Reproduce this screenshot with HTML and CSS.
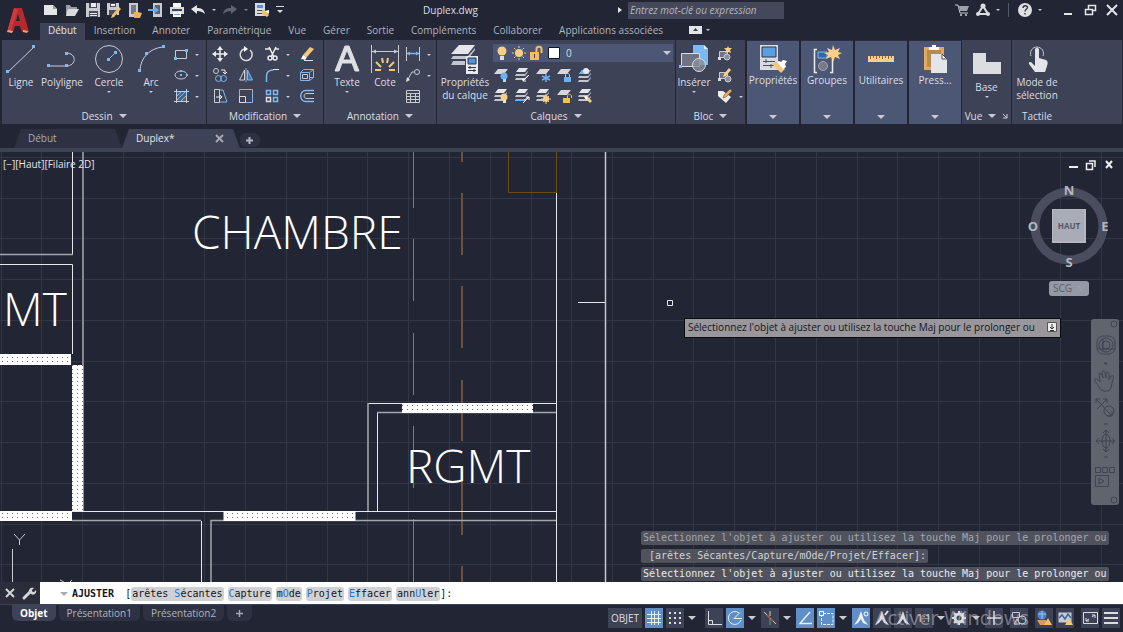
FILE: index.html
```html
<!DOCTYPE html>
<html lang="fr">
<head>
<meta charset="utf-8">
<title>Duplex.dwg</title>
<meta name="viewport" content="width=device-width, initial-scale=1">
<link rel="stylesheet" href="styles.css">
</head>
<body>
<svg class="defs" aria-hidden="true">
  <defs>
    <g id="sheets"><path d="M5 1h9l-3 4H2z" fill="#e4e6ea"/><path d="m2 7 9 0 3-3v1l-3 4H1zM2 11l9 0 3-3v1l-3 4H1z" fill="#c3c6cd"/></g>
    <path id="sheet" d="M5 2h10l-4 5H1z" fill="#d5d7dc"/>
    <pattern id="hatch" width="5" height="4" patternUnits="userSpaceOnUse"><rect width="5" height="4" fill="#fff"/><rect x="2" y="1" width="1" height="1" fill="#6a6d78"/></pattern>
  </defs>
</svg>

<header class="app-header">
  <button class="logo" aria-label="Menu de l'application">
    <svg width="24" height="28" viewBox="0 0 24 28"><path d="M1 26 8 2h8l7 24h-7l-2-6H9l-2 6z" fill="#b8292f"/><path d="m10 15 2-7 2 7z" fill="#222634"/><path d="m8 2-7 24 4-2L12 4z" fill="#d03a3e"/><path d="m2 24 5 1-1 2-5-1zm15 0 5 1-1 2-4-1z" fill="#e9a27c"/></svg>
  </button>
  <div class="title-row">
    <div class="quick">
      <button aria-label="Nouveau"><svg width="16" height="16"><path d="M1 3h9l4 4v6H1z" fill="#e4e5e8"/><path d="m10 3 4 4h-4z" fill="#9b9da6"/></svg></button>
      <button aria-label="Ouvrir"><svg width="16" height="16"><path d="M2 14V3h4l1 2h6v2" fill="#9b9da6"/><path d="m4 7h11l-4 7H2z" fill="#d8dade"/></svg></button>
      <button aria-label="Enregistrer"><svg width="16" height="16"><path d="M1 1h14v14H1z" fill="#c9cbd1"/><path d="M4 1h8v5H4zM4 9h9v6H4z" fill="#4a4e5e"/><path d="M6 1h5v4H6zM5 11h7v1H5zM5 13h7v1H5z" fill="#e9eaed"/></svg></button>
      <button aria-label="Enregistrer sous"><svg width="16" height="16"><path d="M1 1h12v12H1z" fill="#c9cbd1"/><path d="M4 1h6v4H4zM3 8h8v5H3z" fill="#4a4e5e"/><path d="M5 2h4v2H5z" fill="#eee"/><path d="m13 5 2 2-7 8-3 1 1-3z" fill="#f2c06a"/></svg></button>
      <button aria-label="Ouvrir depuis le mobile"><svg width="16" height="16"><rect x="2" y="1" width="9" height="14" fill="#c9cbd1"/><path d="M4 3h5v9H4z" fill="#767a88"/><path d="M7 10h4l4 1-2 5H7z" fill="#e8b25c"/></svg></button>
      <button aria-label="Enregistrer sur le mobile"><svg width="16" height="16"><rect x="5" y="1" width="9" height="14" fill="#c9cbd1"/><path d="M7 3h5v9H7z" fill="#5d6170"/><path d="M0 7h6V4l5 4-5 4V9H0z" fill="#6ea8e0"/></svg></button>
      <button aria-label="Tracer"><svg width="16" height="16"><path d="M4 1h8v4H4z" fill="#fff"/><path d="M1 5h14v7H1z" fill="#d9dbdf"/><path d="M3 7h10v2H3z" fill="#3d4358"/><path d="M4 10h8v5H4z" fill="#f7f8fa"/><path d="M5 12h6v1H5z" fill="#6ea8e0"/></svg></button>
      <button aria-label="Annuler"><svg width="16" height="16"><path d="m1 7 6-4v3c4 0 7 1 8 6-2-2-5-3-8-3v3z" fill="#e4e5e8"/></svg></button>
      <i class="caret"></i>
      <button aria-label="Rétablir"><svg width="16" height="16"><path d="M15 7 9 3v3c-4 0-7 1-8 6 2-2 5-3 8-3v3z" fill="#5f6475"/></svg></button>
      <i class="caret dim"></i>
      <button aria-label="Propriétés"><svg width="16" height="16"><path d="M1 1h10v13H1z" fill="#d9dbdf"/><path d="M3 3h6v3H3z" fill="#4f94d8"/><path d="M3 8h6v1H3zM3 11h5v1H3z" fill="#4a4e5e"/><path d="m8 8 4 1 3 4-2 2-5-3z" fill="#f2c06a"/><path d="m11 9 4-1v4z" fill="#fff"/></svg></button>
      <button aria-label="Personnaliser"><svg width="10" height="12"><path d="M1 2h8v1H1zM2 6h6L5 9z" fill="#d9dbdf"/></svg></button>
    </div>
    <h1>Duplex.dwg</h1>
    <i class="arrow-right"></i>
    <input class="search" type="search" placeholder="Entrez mot-clé ou expression" aria-label="Rechercher">
    <div class="window-tools">
      <button aria-label="Boutique"><svg width="16" height="16"><path d="M1 3h3l2 8h8" fill="none" stroke="#c9cbd1"/><path d="M5 4h10l-2 5H6z" fill="#9da0ab"/><circle cx="7" cy="13" r="1" fill="#c9cbd1"/><circle cx="12" cy="13" r="1" fill="#c9cbd1"/></svg></button>
      <button aria-label="Autodesk"><svg width="16" height="16"><path d="m8 4-5 8h10z" fill="none" stroke="#dcdde1" stroke-width="2"/><circle cx="8" cy="4" r="2.500" fill="#dcdde1"/><circle cx="3" cy="12" r="2" fill="#dcdde1"/><circle cx="13" cy="12" r="2" fill="#dcdde1"/></svg></button>
      <i class="caret"></i>
      <span class="rule"></span>
      <button aria-label="Aide"><svg width="16" height="16"><circle cx="8" cy="8" r="7" fill="#dfe0e4"/><path d="M6 6c0-3 4.500-3 4.500-.5C10.500 7 8 7 8 9.500M8 11v1.500" fill="none" stroke="#30354a" stroke-width="1.400"/></svg></button>
      <i class="caret"></i>
      <button class="win" aria-label="Réduire"><svg width="14" height="14"><path d="M3 10h8v2H3z" fill="#e4e5e8"/></svg></button>
      <button class="win" aria-label="Restaurer"><svg width="14" height="14"><path d="M2.500 6.500h7v5h-7zM5.500 6V2.500h7v5H10" fill="none" stroke="#e4e5e8" stroke-width="1.500"/></svg></button>
      <button class="win" aria-label="Fermer"><svg width="14" height="14"><path d="m2 2 10 10M12 2 2 12" stroke="#e4e5e8" stroke-width="2"/></svg></button>
    </div>
  </div>
  <nav class="ribbon-tabs">
    <button class="on">Début</button><button>Insertion</button><button>Annoter</button><button>Paramétrique</button><button>Vue</button><button>Gérer</button><button>Sortie</button><button>Compléments</button><button>Collaborer</button><button>Applications associées</button>
    <button class="collapse" aria-label="Réduire le ruban"><svg width="13" height="8"><path d="M0 0h13v8H0z" fill="#e4e5e8"/><path d="M4 5h5L6.500 2z" fill="#3d4155"/></svg><i class="caret"></i></button>
  </nav>
</header>

<main class="ribbon">
  <section class="panel w-draw">
    <div class="tools">
      <button class="big ligne"><svg width="30" height="30"><path d="M2 28 28 3" stroke="#c9cbd1"/><path d="M0 26h3v3H0zM26 1h3v3h-3z" fill="#7db8f0"/></svg><span>Ligne</span></button>
      <button class="big poly"><svg width="30" height="30"><path d="M2 22h17c11 0 11-13 0-13" fill="none" stroke="#c9cbd1"/><path d="M0 20h3v3H0zM18 20h3v3h-3zM18 8h3v3h-3z" fill="#7db8f0"/></svg><span>Polyligne</span></button>
      <button class="big cercle"><svg width="30" height="30"><circle cx="15" cy="15" r="13.500" fill="none" stroke="#c9cbd1"/><path d="m15 15 6-6" stroke="#7db8f0"/><path d="M13 14h3v3h-3zM20 7h3v3h-3z" fill="#7db8f0"/></svg><span>Cercle</span><i class="caret"></i></button>
      <button class="big arc"><svg width="30" height="30"><path d="M4 27C4 14 14 4 27 3" fill="none" stroke="#c9cbd1"/><path d="M2 25h3v3H2zM9 8h3v3H9zM26 1h3v3h-3z" fill="#7db8f0"/></svg><span>Arc</span><i class="caret"></i></button>
      <div class="smalls one">
        <button aria-label="Rectangle"><svg width="16" height="16"><path d="M2.500 4.500h11v8h-11z" fill="none" stroke="#c9cbd1"/><path d="M1 11h3v3H1zM12 3h3v3h-3z" fill="#7db8f0"/></svg><i class="caret"></i></button>
        <button aria-label="Ellipse"><svg width="16" height="16"><ellipse cx="8" cy="8" rx="6" ry="4" fill="none" stroke="#c9cbd1"/><path d="M7 7h2v2H7zM7 3h2v2H7zM13 7h2v2h-2z" fill="#7db8f0"/></svg><i class="caret"></i></button>
        <button aria-label="Hachures"><svg width="16" height="16"><path d="M4 4h9v9H4z" fill="#4c6484"/><path d="m4 8 4-4M4 12l8-8M8 13l5-5" stroke="#7db8f0"/><path d="M3.500 1v14M13.500 1v14M1 3.500h15M1 13.500h15" stroke="#c9cbd1"/></svg><i class="caret"></i></button>
      </div>
    </div>
    <h2>Dessin <i class="caret"></i></h2>
  </section>

  <section class="panel w-modify">
    <div class="tools">
      <div class="smalls modify">
        <button aria-label="Déplacer"><svg width="16" height="16"><path d="M8 2v12M2 8h12" stroke="#eceded" stroke-width="1.500"/><path d="m8 0 3 4H5zM8 16l3-4H5zM0 8l4-3v6zM16 8l-4-3v6z" fill="#eceded"/></svg></button>
        <button aria-label="Rotation"><svg width="16" height="16"><path d="M12 4a6 6 0 1 1-6-1" fill="none" stroke="#dcdde1" stroke-width="1.500"/><path d="m6 0 4 3-4 3z" fill="#fff"/></svg></button>
        <button aria-label="Ajuster"><svg width="16" height="16"><path d="M1 3h6M11 3h4M5 1l5 10M12 1 7 11" stroke="#eceded" stroke-width="1.500"/><circle cx="6" cy="12" r="2" fill="none" stroke="#eceded" stroke-width="1.500"/><circle cx="11" cy="12" r="2" fill="none" stroke="#eceded" stroke-width="1.500"/></svg><i class="caret"></i></button>
        <button aria-label="Effacer"><svg width="16" height="16"><path d="m11 1 4 2-7 8-4-2z" fill="#f4c67a"/><path d="m4 9 4 2-2 3-4-1z" fill="#fff"/><path d="m2 13 4 1H1z" fill="#d8383c"/><path d="M5 14.500h9" stroke="#dcdde1"/></svg></button>
        <button aria-label="Copier"><svg width="16" height="16"><circle cx="4" cy="4" r="2.500" fill="none" stroke="#c9cbd1"/><path d="M9 3h4v4m-2-2 2 2 2-2" fill="none" stroke="#eceded"/><circle cx="6.500" cy="11.500" r="3" fill="none" stroke="#7db8f0"/><circle cx="11.500" cy="11.500" r="3" fill="none" stroke="#7db8f0"/></svg></button>
        <button aria-label="Miroir"><svg width="16" height="16"><path d="M6.500 3v10h-5z" fill="none" stroke="#c9cbd1"/><path d="M9.500 3v10h5z" fill="#3f76ae" stroke="#7db8f0"/><path d="M8 1v14" stroke="#8fa6c4"/></svg></button>
        <button aria-label="Raccord"><svg width="16" height="16"><path d="M2.500 15V9c0-4 3-6 7-6" fill="none" stroke="#7db8f0" stroke-width="1.500"/><path d="M9 2.500h6" stroke="#eceded"/></svg><i class="caret"></i></button>
        <button aria-label="Décomposer"><svg width="16" height="16"><path d="M1.500 5.500h9v8h-9zM4.500 2.500h10v8h-4M1.500 5.500l3-3M10.500 5.500l4-3M10.500 13.500l4-3" fill="none" stroke="#7db8f0"/><path d="M3.500 7.500h5v4h-5z" fill="none" stroke="#c9cbd1"/></svg></button>
        <button aria-label="Étirer"><svg width="16" height="16"><path d="M2.500 1.500h5v13h-5z" fill="none" stroke="#c9cbd1"/><path d="m8 2 3 0 4 12H8" fill="none" stroke="#7db8f0"/><path d="M4 9h6m-2-2 2 2-2 2" fill="none" stroke="#eceded"/></svg></button>
        <button aria-label="Échelle"><svg width="16" height="16"><path d="M1.500 1.500h13v13h-13z" fill="none" stroke="#7db8f0"/><path d="M1.500 8.500h6v6h-6z" fill="#3e4257" stroke="#dcdde1"/></svg></button>
        <button aria-label="Réseau"><svg width="16" height="16"><path d="M2.500 2.500h4v4h-4zM9.500 2.500h4v4h-4zM9.500 9.500h4v4h-4z" fill="none" stroke="#7db8f0" stroke-width="1.500"/><path d="M2.500 9.500h4v4h-4z" fill="none" stroke="#dcdde1" stroke-width="1.500"/></svg><i class="caret"></i></button>
        <button aria-label="Décaler"><svg width="16" height="16"><path d="M15 2.500H7c-7 0-7 11 0 11h8" fill="none" stroke="#7db8f0" stroke-width="1.500"/><path d="M15 5.500H8c-4 0-4 5 0 5h7" fill="none" stroke="#c9cbd1"/></svg></button>
      </div>
    </div>
    <h2>Modification <i class="caret"></i></h2>
  </section>

  <section class="panel w-annot">
    <div class="tools">
      <button class="big texte"><svg width="30" height="30"><path d="M3 27 13 2h4l10 25h-4l-3-8H10l-3 8zm8-11h8l-4-10z" fill="#dfe0e4" stroke="#dfe0e4"/></svg><span>Texte</span><i class="caret"></i></button>
      <button class="big cote"><svg width="30" height="30"><path d="M1.500 1v28M28.500 1v28M2 7.500h26" stroke="#c9cbd1" fill="none"/><path d="m2 7.500 4-2v4zM28 7.500l-4-2v4z" fill="#c9cbd1"/><path d="m6 18 5 5M24 18l-5 5M12 14l1 5M18 14l-1 5M5 26h6M25 26h-6" stroke="#f4c67a" stroke-width="2"/></svg><span>Cote</span></button>
      <div class="smalls one">
        <button aria-label="Linéaire"><svg width="16" height="16"><path d="M1.500 1v14M14.500 1v14" stroke="#c9cbd1"/><path d="M2 7.500h12" stroke="#7db8f0" stroke-width="1.500"/><path d="m2 7.500 3-2v4zM14 7.500l-3-2v4z" fill="#7db8f0"/></svg><i class="caret"></i></button>
        <button aria-label="Repère"><svg width="16" height="16"><circle cx="12" cy="5" r="2.500" fill="none" stroke="#c9cbd1"/><path d="M9 5H7l-5 9" fill="none" stroke="#c9cbd1"/><path d="m1 15 1-5 3 3z" fill="#dcdde1"/></svg><i class="caret"></i></button>
        <button aria-label="Tableau"><svg width="16" height="16"><path d="M1.500 2.500h13v12h-13zM1.500 5.500h13M1.500 8.500h13M1.500 11.500h13M5.500 5v9M10.500 5v9" fill="none" stroke="#c9cbd1"/></svg></button>
      </div>
    </div>
    <h2>Annotation <i class="caret"></i></h2>
  </section>

  <section class="panel w-layers">
    <div class="tools">
      <button class="big calque"><svg width="30" height="30"><path d="M9 1h16l-7 9H1z" fill="#e4e6ea"/><path d="m3 12-2 3h17l7-9v-2l-7 8zM3 17l-2 4h14v-4z" fill="#c3c6cd"/><path d="M16 12h12v18H16z" fill="#e9eaed"/><path d="M18 14h8v6h-8z" fill="#4f94d8" stroke="#30354a"/><path d="M18 23.500h8M18 26.500h8M20 22v3M24 25v3" stroke="#30354a"/></svg><span>Propriétés du calque</span></button>
      <div class="layer-side">
        <label class="layer-combo">
          <svg width="68" height="18"><circle cx="9" cy="7" r="4.500" fill="#f8cf85"/><path d="M7 12h4v4H7z" fill="#dcdde1"/><circle cx="26" cy="9" r="4" fill="#f8cf85"/><path d="M26 2v14M19 9h14M21 4l10 10M31 4 21 14" stroke="#f8cf85" stroke-dasharray="2 10"/><path d="M37 8h9v8h-9z" fill="#f4bd62"/><path d="M43.500 8V5c0-3 5-3 5 0v4" fill="none" stroke="#f4bd62" stroke-width="2"/><path d="M41 10h1v4h-1z" fill="#3d4257"/><path d="M55.500 3.500h11v11h-11z" fill="#fff" stroke="#14161f"/></svg>
          <select aria-label="Calque courant"><option>0</option></select>
          <i class="caret wide"></i>
        </label>
        <div class="layer-grid">
          <button aria-label="Désactiver"><svg width="16" height="16"><use href="#sheet"/><circle cx="11" cy="9" r="3.500" fill="#6fb1f0"/><path d="M10 12h3v3h-3z" fill="#b9d4f0"/></svg></button>
          <button aria-label="Isoler"><svg width="16" height="16"><use href="#sheets"/><path d="m15 8-6 6m0-3v3h3" fill="none" stroke="#fff"/></svg></button>
          <button aria-label="Geler"><svg width="16" height="16"><use href="#sheet"/><path d="M11 7v8M7 9l8 4M7 13l8-4" stroke="#6fb1f0" stroke-width="1.500"/></svg></button>
          <button aria-label="Verrouiller"><svg width="16" height="16"><use href="#sheet"/><path d="M8 10h7v5H8z" fill="#6fb1f0"/><path d="M9.500 10V8c0-2 4-2 4 0v2" fill="none" stroke="#a8cdf3"/></svg></button>
          <button aria-label="Rendre courant"><svg width="16" height="16"><use href="#sheets" y="2"/><path d="M5 3h9l-3 4H2z" fill="#6fb1f0"/><circle cx="9" cy="4" r="3" fill="#e9eaed"/></svg></button>
          <button aria-label="Activer tous"><svg width="16" height="16"><use href="#sheets"/><circle cx="11" cy="9" r="3.500" fill="#f8cf85"/><path d="M10 12h3v3h-3z" fill="#f8e3bd"/></svg></button>
          <button aria-label="Annuler l'isolement"><svg width="16" height="16"><use href="#sheets"/><path d="M2 11h8l1 2H2z" fill="#6fb1f0"/><path d="m9 15 6-6m-3 0h3v3" fill="none" stroke="#fff"/></svg></button>
          <button aria-label="Dégeler tous"><svg width="16" height="16"><use href="#sheets"/><circle cx="11" cy="11" r="3" fill="#f8cf85"/><path d="M11 6v10M6 11h10M8 8l6 6M14 8l-6 6" stroke="#f8cf85"/></svg></button>
          <button aria-label="Déverrouiller"><svg width="16" height="16"><use href="#sheet"/><path d="M7 10h7v5H7z" fill="#f4bd62"/><path d="M11.500 10V8c0-2 4-2 4 0v2" fill="none" stroke="#f4bd62"/></svg></button>
          <button aria-label="Copier les propriétés"><svg width="16" height="16"><use href="#sheets"/><path d="m7 9 3-1 5 5-2 2z" fill="#f8cf85"/><path d="m7 8 4 1-2 3z" fill="#fff"/></svg></button>
        </div>
      </div>
    </div>
    <h2>Calques <i class="caret"></i></h2>
  </section>

  <section class="panel w-block">
    <div class="tools">
      <button class="big inserer"><svg width="30" height="30"><path d="M14 1h11l4 4v16H14z" fill="#7db8f0"/><path d="m25 1 4 4h-4z" fill="#dcecfb"/><path d="M2.500 9.500h18v13h-18z" fill="#6f7383" stroke="#dcdde1"/><circle cx="20" cy="21" r="6.500" fill="#8a8d9a" fill-opacity=".8" stroke="#dcdde1"/><path d="M0 21h3v3H0z" fill="#7db8f0"/></svg><span>Insérer</span><i class="caret"></i></button>
      <div class="smalls one">
        <button aria-label="Créer"><svg width="16" height="16"><path d="M2.500 5.500h8v6h-8z" fill="#6f7383" stroke="#c9cbd1"/><circle cx="10" cy="11" r="3" fill="#8a8d9a" stroke="#c9cbd1"/><path d="M1 11h3v3H1z" fill="#dcdde1"/><path d="m11 0 1 2 3 0-2 2 1 3-3-1-3 1 1-3-2-2h3z" fill="#f8cf85"/></svg></button>
        <button aria-label="Modifier"><svg width="16" height="16"><path d="M2.500 5.500h8v6h-8z" fill="#6f7383" stroke="#c9cbd1"/><circle cx="11" cy="12" r="3" fill="#8a8d9a" stroke="#c9cbd1"/><path d="M1 11h3v3H1z" fill="#dcdde1"/><path d="m12 1 2 2-5 6-3 1 1-3z" fill="#f8cf85"/></svg></button>
        <button aria-label="Attributs"><svg width="16" height="16"><path d="M1 3h5l8 6-5 6-8-7z" fill="#eceded"/><path d="m13 1 2 2-6 6-3 1 1-3z" fill="#f4a850" stroke="#4a4e5e" stroke-width=".5"/></svg><i class="caret"></i></button>
      </div>
    </div>
    <h2>Bloc <i class="caret"></i></h2>
  </section>

  <button class="panel closed"><svg width="30" height="30"><path d="M2 1h18v25H2z" fill="#d9dbdf"/><path d="M4 3h14v10H4z" fill="#5c9fe0" stroke="#30354a"/><path d="M5 17.500h12M5 21.500h12M8 15v4M13 20v4" stroke="#4a4e5e"/><path d="m14 20 6-3 7 8-4 4z" fill="#f4c67a"/><path d="m19 18 6 7 3-2-1-3 2-3-4-1-2 2-2-1z" fill="#fff"/></svg><span>Propriétés</span><i class="caret wide"></i></button>
  <button class="panel closed"><svg width="30" height="30"><path d="M5 5.500H2.500v23H5M18 28.500h2.500V14" fill="none" stroke="#eceded" stroke-width="1.500"/><path d="M6 8h9v6H6z" fill="#2f69a6" stroke="#7db8f0"/><circle cx="11" cy="22" r="4.500" fill="#777b89" stroke="#a4a7b2"/><path d="m21 1 2 5 5-2-2 4 4 1-4 2 2 4-5-2-2 5-2-5-5 2 2-4-4-2 5-1-2-4 5 2z" fill="#f8cf85"/></svg><span>Groupes</span><i class="caret wide"></i></button>
  <button class="panel closed"><svg width="30" height="30"><path d="M2 12h26v6H2z" fill="#f8cf85"/><path d="M4.500 12v3M7.500 12v2M10.500 12v3M13.500 12v2M16.500 12v3M19.500 12v2M22.500 12v3M25.500 12v2" stroke="#8b6a35"/></svg><span>Utilitaires</span><i class="caret wide"></i></button>
  <button class="panel closed"><svg width="30" height="30"><path d="M4 3h20v23H4z" fill="#e0aa62"/><path d="M7 6h14v17H7z" fill="#b98a4e"/><path d="M9 3h3V1h4v2h3v3H9z" fill="#fff"/><path d="M11 10h11l5 5v14H11z" fill="#e4e5e8"/><path d="m22 10 5 5h-5z" fill="#fff" stroke="#4a4e5e"/></svg><span>Press...</span><i class="caret wide"></i></button>

  <section class="panel w-view">
    <div class="tools centre"><button class="big base"><svg width="30" height="36"><path d="M1 10h13v9h15v12H1z" fill="#dcdde1"/></svg><span>Base</span><i class="caret"></i></button></div>
    <h2>Vue <i class="caret"></i><svg width="6" height="6"><path d="m1 1 4 4M5 1v4H1" fill="none" stroke="#c9cbd1"/></svg></h2>
  </section>
  <section class="panel w-touch">
    <div class="tools"><button class="big mode"><svg width="30" height="30"><path d="M9 12a6.500 6.500 0 1 1 12 0" fill="none" stroke="#c9cbd1"/><path d="M13 6c0-3 4-3 4 0v8l7 2c2 1 2 3 1 6l-2 6H13l-6-8c-1-2 2-3 3-1l3 3z" fill="#e4e5e8"/></svg><span>Mode de sélection</span></button></div>
    <h2>Tactile</h2>
  </section>
</main>

<nav class="file-tabs">
  <button class="file first">Début</button>
  <button class="file on">Duplex*<svg width="9" height="9"><path d="m1 1 7 7M8 1 1 8" stroke="#a4a7b2" stroke-width="2"/></svg></button>
  <button class="file plus" aria-label="Nouveau dessin"><svg width="9" height="9"><path d="M4.500 1v7M1 4.500h7" stroke="#b4b7c1" stroke-width="2"/></svg></button>
</nav>

<section class="canvas">
  <svg class="drawing" width="100%" height="100%">
    <g transform="translate(0 -152)">
      <path d="M1.500 152v480M41.500 152v480M82.500 152v480M123.500 152v480M163.500 152v480M204.500 152v480M245.500 152v480M286.500 152v480M327.500 152v480M367.500 152v480M408.500 152v480M449.500 152v480M490.500 152v480M531.500 152v480M571.500 152v480M612.500 152v480M653.500 152v480M693.500 152v480M734.500 152v480M775.500 152v480M816.500 152v480M857.500 152v480M897.500 152v480M938.500 152v480M979.500 152v480M1019.500 152v480M1060.500 152v480M1101.500 152v480M0 157.500h2000M0 198.500h2000M0 238.500h2000M0 279.500h2000M0 320.500h2000M0 361.500h2000M0 401.500h2000M0 442.500h2000M0 483.500h2000M0 524.500h2000M0 564.500h2000" stroke="#323645"/>
      <g fill="none">
        <path d="M413.500 152v56M413.500 239v62M413.500 333v62M413.500 426v62M413.500 519v63" stroke="#a07833"/>
        <path d="M462 152v10M462 193v62M462 286v62M462 380v61M462 473v62M462 566v16" stroke="#6c523b" stroke-width="2"/>
        <path d="M508.500 152v40.500h48V152" stroke="#6b4b1c"/>
      </g>
      <g fill="none" stroke="#e6e7ea">
        <path d="M72.500 152v102M0 264.500h72.500V354M72 511.500h484M201.500 521v61M556.500 193v389M377.500 511v-98M368 403.500h188M578 302.500h27"/>
        <path d="M83 152v213M0 254.500h73M72 520.500h129M211 582v-61.500h345M368 403v108M377 412.500h179" stroke="#a4a6ad" stroke-width="1.500"/>
        <path d="M605.500 152v430" stroke="#c6c8cc" stroke-width="1.500"/>
        <path d="m14 534 5.500 6 5.500-6M19.500 540v5M12.500 549v33M60 580l4 2M72 580l-2 2" stroke="#c9cbd1"/>
        <path d="M667.500 300.500h5v5h-5z"/>
      </g>
      <g fill="url(#hatch)"><path d="M0 354h71v11H0zM72 365h11.500v146H72zM0 511h72v10H0zM223.500 511h132v10h-132zM402 403h131v10H402z"/></g>
      <g class="room"><text x="192" y="249">CHAMBRE</text><text x="406" y="483">RGMT</text><text x="3" y="326">MT</text></g>
    </g>
  </svg>
  <p class="view-label">[−][Haut][Filaire 2D]</p>
  <div class="view-controls">
    <button aria-label="Réduire la vue"><svg width="12" height="12"><path d="M2 7h9v2H2z" fill="#eceded"/></svg></button>
    <button aria-label="Restaurer la vue"><svg width="12" height="12"><path d="M1.500 4.500h6v6h-6zM4 2h6v6" fill="none" stroke="#eceded" stroke-width="1.500"/></svg></button>
    <button aria-label="Fermer la vue"><svg width="12" height="12"><path d="m3 2 6 7M9 2 3 9" stroke="#eceded" stroke-width="2"/></svg></button>
  </div>
  <svg class="cube" width="84" height="92" viewBox="0 0 84 92">
    <circle cx="42" cy="46" r="34" fill="none" stroke="#4a4d5e" stroke-width="9"/>
    <path d="M25 29h34v34H25z" fill="#b4b6c0"/><path d="M26 30h31v31H26z" fill="#a9abb7"/>
    <g class="cube-text"><text x="42" y="15">N</text><text x="6" y="51">O</text><text x="78" y="51">E</text><text x="42" y="87">S</text></g>
    <text class="cube-face" x="42" y="49">HAUT</text>
  </svg>
  <button class="scg">SCG<svg width="8" height="6"><path d="M1 1h6L4 5z" fill="none" stroke="#9d9faa"/></svg></button>
  <div class="nav-bar">
    <svg width="28" height="186" fill="none" stroke="#3f4352">
      <circle cx="23" cy="5" r="3"/><circle cx="23" cy="181" r="3"/>
      <rect x="6" y="17" width="18" height="18" rx="6"/><circle cx="15" cy="26" r="7"/><circle cx="15" cy="26" r="4"/><path d="M6 30h18M12 20v12M13 44h3l-1 2z"/>
      <path d="M8 68c-2-4-5-6-4-8s4 2 5 3l-1-8c0-2 2-1 3 1l1 3-1-6c1-2 3-1 3 1l1 5V54c1-2 3-1 3 1v6l2-4c2-1 3 0 2 3l-2 9c-1 4-9 5-12-1z"/>
      <path d="m5 80 16 17m0-5v5h-5M16 80l-10 10m10-10h-4m4 0v4M5 80h4m-4 0v4M13 105h4"/><circle cx="18" cy="92" r="5"/>
      <path d="M15 111v22m-3-19 3-3 3 3m-6 16 3 3 3-3M5 122h19m-16-3-3 3 3 3m13-6 3 3-3 3"/><ellipse cx="15" cy="122" rx="4" ry="7"/><path d="M13 138h4"/>
      <path d="M4.500 148.500h5v5h-5zM11.500 148.500h5v5h-5zM18.500 148.500h5v5h-5zM4.500 156.500h13v11h-13zM8 159v6l5-3z"/>
    </svg>
  </div>
  <div class="prompt-tip"><span>Sélectionnez l'objet à ajuster ou utilisez la touche Maj pour le prolonger ou</span><svg width="10" height="10"><path d="M.5.5h9v9h-9z" fill="#eceded" stroke="#555"/><path d="M5 2v5M3 5l2 2 2-2M3 8.500h4" fill="none" stroke="#333"/></svg></div>
  <div class="history">
    <p class="old">Sélectionnez l'objet à ajuster ou utilisez la touche Maj pour le prolonger ou</p>
    <p class="mid"> [arêtes Sécantes/Capture/mOde/Projet/Effacer]:</p>
    <p>Sélectionnez l'objet à ajuster ou utilisez la touche Maj pour le prolonger ou</p>
  </div>
</section>

<section class="command">
  <button aria-label="Fermer"><svg width="16" height="16"><path d="m4 4 8 8M12 4l-8 8" stroke="#d3d5da" stroke-width="2"/></svg></button>
  <button aria-label="Personnaliser"><svg width="16" height="16"><path d="m3 13 6-6" stroke="#d3d5da" stroke-width="3" stroke-linecap="round"/><path d="M8 8c-1-4 2-6 5-5l-2 2v1l1 1h1l2-2c1 3-2 6-5 4z" fill="#d3d5da"/></svg></button>
  <div class="line"><i class="caret grey"></i><b>AJUSTER</b><span>[</span><button>arêtes <em>S</em>écantes</button><button><em>C</em>apture</button><button>m<em>O</em>de</button><button><em>P</em>rojet</button><button><em>E</em>ffacer</button><button>ann<em>U</em>ler</button><span class="end">]:</span><input type="text" aria-label="Commande"></div>
</section>

<footer class="status">
  <nav class="layouts"><button class="on">Objet</button><button>Présentation1</button><button>Présentation2</button><button class="add" aria-label="Nouvelle présentation"><svg width="9" height="9"><path d="M4.500 1v7M1 4.500h7" stroke="#a4a7b2" stroke-width="1.500"/></svg></button></nav>
  <div class="toggles">
    <button class="word">OBJET</button>
    <button class="hot" aria-label="Grille"><svg width="18" height="18"><path d="M6.500 2v14M9.500 2v14M13.500 2v14M2 5.500h14M2 9.500h14M2 13.500h14" stroke="#e9eef6"/></svg></button>
    <button aria-label="Accrochage"><svg width="18" height="18"><path d="M3 4h12M3 9h12M3 14h12" stroke="#dcdde1" stroke-width="2" stroke-dasharray="2 3"/></svg></button><i class="caret wide"></i>
    <button class="gap" aria-label="Ortho"><svg width="18" height="18"><path d="M3.500 2v13.500H17M3.500 11.500h4v4" fill="none" stroke="#dcdde1"/></svg></button>
    <button class="hot" aria-label="Repérage polaire"><svg width="18" height="18"><path d="M13 4a6.500 6.500 0 1 0 2 7M8 9.500h8M8 9.500l6-6" fill="none" stroke="#e9eef6"/></svg></button><i class="caret wide"></i>
    <button aria-label="Isométrie"><svg width="18" height="18"><path d="m3 3 12 12M9 2v5" stroke="#c9cbd1"/><path d="m6 6 6 6" stroke="#c8523e" stroke-width="1.500"/><path d="M9 9v7" stroke="#59a46a"/></svg></button><i class="caret wide"></i>
    <button class="hot" aria-label="Repérage d'accrochage"><svg width="18" height="18"><path d="M14 3 4 14.500h12" fill="none" stroke="#e9eef6" stroke-width="1.500"/></svg></button>
    <button class="hot" aria-label="Accrochage aux objets"><svg width="18" height="18"><path d="M6 4.500h10v11H4.500V7" fill="none" stroke="#e9eef6" stroke-dasharray="3 1"/><path d="M2.500 2.500h4v4h-4z" fill="#6191c8" stroke="#fff"/></svg></button><i class="caret wide"></i>
    <button class="hot" aria-label="Visibilité des annotations"><svg width="18" height="18"><path d="m9 2 3 9 4 5-5-2-2-4-3 4-4 2 4-6z" fill="#eef2f8"/><circle cx="14" cy="5" r="2" fill="none" stroke="#fff"/></svg></button>
    <button aria-label="Échelle automatique"><svg width="18" height="18"><path d="m9 2 3 9 4 5-5-2-2-4-3 4-4 2 4-6z" fill="#dcdde1"/><path d="m12 6 3-4" stroke="#dcdde1" stroke-width="2"/></svg></button>
    <button aria-label="Annotation"><svg width="18" height="18"><path d="m9 2 3 9 4 5-5-2-2-4-3 4-4 2 4-6z" fill="#dcdde1"/></svg></button>
    <button>1:1</button><i class="caret wide"></i>
    <button aria-label="Espace de travail"><svg width="18" height="18"><circle cx="9" cy="9" r="4" fill="none" stroke="#dcdde1" stroke-width="3"/><path d="M9 2v3M9 13v3M2 9h3M13 9h3M4 4l2 2M12 12l2 2M14 4l-2 2M6 12l-2 2" stroke="#dcdde1" stroke-width="2"/></svg></button><i class="caret wide"></i>
    <button aria-label="Surveillance"><svg width="18" height="18"><path d="M9 2v14M2 9h14" stroke="#dcdde1" stroke-width="1.500"/></svg></button>
    <button class="gap" aria-label="Isoler les objets"><svg width="18" height="18"><path d="M2.500 3.500h7v5h-7zM4 15l3-5 3 5z" fill="none" stroke="#c9cbd1"/><circle cx="12" cy="11" r="4" fill="none" stroke="#c9cbd1"/></svg></button>
    <button class="gap" aria-label="Accélération"><svg width="18" height="18"><circle cx="7" cy="6" r="4.500" fill="#4e84bf"/><path d="M3 5h8M7 2v8" stroke="#9fc6ee"/><path d="M2 11h9l3 5H5z" fill="#d99a54"/><path d="m13 9 4 7H9z" fill="#f4bd62"/></svg></button>
    <button aria-label="Performances"><svg width="18" height="18"><path d="M2.500 3.500h13v10h-13z" fill="#c9cbd1"/><path d="m3 9 3-3 3 4 3-5 3 4" fill="none" stroke="#36699f" stroke-width="1.500"/><path d="m13 9 4 7H9z" fill="#f4c67a"/></svg></button>
    <button class="gap" aria-label="Plein écran"><svg width="18" height="18"><path d="M2.500 3.500h14v11h-14zM5 12l3-2M5 9v3h3M14 6l-3 2m0-2h3v3" fill="none" stroke="#dcdde1"/></svg></button>
    <button aria-label="Personnalisation"><svg width="18" height="18"><path d="M2 4h14M2 9h14M2 14h14" stroke="#dcdde1" stroke-width="2"/></svg></button>
  </div>
  <span class="watermark">Activer Windows</span>
</footer>
</body>
</html>
```
FILE: styles.css
```css
* { box-sizing: border-box; }

:root {
  --dark: #222634;
  --panel: #3e4257;
  --panel-open: #4b5774;
  --text: #dcdee3;
}

body {
  margin: 0;
  min-height: 100vh;
  display: flex;
  flex-direction: column;
  background: var(--dark);
  color: var(--text);
  font: 10px/13px "Open Sans", "Noto Sans", sans-serif;
  overflow: hidden;
}

button {
  padding: 0;
  border: 0;
  background: none;
  color: inherit;
  font: inherit;
}

svg { display: block; flex: none; }
p, h1, h2 { margin: 0; font: inherit; }
.defs { position: absolute; width: 0; height: 0; }

.caret {
  flex: none;
  border: 2px solid transparent;
  border-top-color: #c9cbd1;
  border-bottom: 0;
}
.caret.wide { border-width: 4px 4px 0; }
.caret.dim { border-top-color: #7d8190; }
.caret.grey { border-width: 4px 4px 0; border-top-color: #aaa; }
h2 .caret { border-width: 4px 4px 0; }

/* Title bar and ribbon tabs */
.app-header {
  display: grid;
  grid-template-columns: 40px 1fr;
  grid-template-rows: 20px 20px;
}
.logo { grid-row: 1 / 3; display: grid; place-items: center; padding-right: 4px; }
.title-row { display: flex; align-items: center; }
.quick { display: flex; align-items: center; width: 383px; padding-left: 3px; gap: 5px; }
.quick .caret { margin: 0 1px; }
.title-row h1 { width: 195px; }
.arrow-right {
  border: 3px solid transparent;
  border-left: 4px solid #e4e5e8;
  border-right: 0;
  margin-right: 6px;
}
.search {
  width: 156px;
  height: 17px;
  padding: 0 2px;
  border: 0;
  background: #44485a;
  color: #c3c5cc;
  font: italic 10px/17px "Open Sans", sans-serif;
}
.search::placeholder { color: #b4b6be; }
.window-tools { display: flex; align-items: center; margin-left: auto; padding-right: 4px; gap: 5px; }
.rule { width: 1px; height: 14px; margin: 0 3px; background: #555968; }
.win { margin-left: 3px; }
.window-tools .caret + .win { margin-left: 14px; }

.ribbon-tabs { display: flex; align-items: stretch; padding-top: 3px; color: #b0b3bd; }
.ribbon-tabs button { padding: 0 8px 3px 9px; white-space: nowrap; }
.ribbon-tabs .on { padding: 0 8px 3px; background: var(--panel); color: #e4e5e8; }
.ribbon-tabs .collapse { display: flex; align-items: center; gap: 4px; padding-left: 18px; }

/* Ribbon */
.ribbon { display: flex; gap: 1px; padding: 0 1px 0 2px; height: 84px; }
.panel { display: flex; flex-direction: column; background: var(--panel); }
.panel h2 {
  display: flex;
  align-items: center;
  justify-content: center;
  gap: 6px;
  margin-top: auto;
  height: 16px;
}
.w-draw { width: 204px; }
.w-modify { width: 116px; }
.w-annot { width: 112px; }
.w-layers { width: 238px; }
.w-block { width: 69px; }
.w-view { width: 49px; }
.w-touch { flex: 1; }
.w-touch h2 { width: 50px; }
.tools { display: flex; padding-top: 3px; height: 67px; }
.tools.centre { justify-content: center; }
.big { display: flex; flex-direction: column; align-items: center; width: 50px; padding-top: 1px; white-space: nowrap; }
.big span { margin-top: 2px; }
.big .caret, .smalls .caret { margin-top: 2px; }
.ligne { width: 38px; }
.poly { width: 44px; }
.cercle { width: 50px; }
.arc { width: 34px; }
.texte { width: 46px; }
.cote { width: 30px; }
.calque { width: 56px; white-space: normal; }
.inserer { width: 36px; }
.base { padding-top: 0; }
.mode { white-space: normal; }

.smalls { display: grid; grid-auto-rows: 21px; }
.smalls button { display: flex; align-items: center; gap: 6px; }
.smalls.one { padding-left: 5px; }
.smalls.modify { grid-template-columns: 26px 26px 35px 20px; padding-left: 5px; }

.layer-combo { display: flex; align-items: center; height: 18px; margin-top: 1px; background: var(--panel-open); padding-right: 2px; }
.layer-side { flex: 1; padding-right: 2px; }
.layer-combo select {
  flex: 1;
  appearance: none;
  padding: 0 5px;
  border: 0;
  background: none;
  color: inherit;
  font: inherit;
}
.layer-grid { display: grid; grid-template-columns: repeat(5, 21px); grid-auto-rows: 21px; align-items: center; padding: 2px 0 0; }

.closed {
  align-items: center;
  width: 52px;
  margin-left: 1px;
  padding: 3px 0 5px;
  background: var(--panel-open);
  border-top: 1px solid #2a2e40;
}
.closed .caret { margin-top: auto; }

/* File tabs */
.file-tabs {
  display: flex;
  align-items: stretch;
  height: 28px;
  padding: 5px 0 0 14px;
  border-bottom: 4px solid var(--panel);
}
.file {
  display: flex;
  align-items: center;
  justify-content: space-between;
  width: 118px;
  padding: 0 16px 0 14px;
  border-radius: 8px 8px 0 0;
  background: #2d3142;
  color: #a9acb7;
  clip-path: polygon(0 100%, 7px 0, calc(100% - 7px) 0, 100% 100%);
}
.file.first { width: 108px; }
.file.on { background: var(--panel); color: #e4e5e8; }
.file.plus { width: 20px; height: 14px; margin: 4px 0; padding: 0 5px; border-radius: 6px; clip-path: none; }

/* Drawing area */
.canvas { position: relative; flex: 1; min-height: 430px; overflow: hidden; }
.drawing { position: absolute; inset: 0; }
.room { fill: #fff; font: 300 46px "Open Sans", sans-serif; }
.view-label { position: absolute; left: 3px; top: 6px; color: #e4e5e8; }
.view-controls { position: absolute; right: 8px; top: 7px; display: flex; gap: 6px; }
.cube { position: absolute; right: 12px; top: 28px; }
.cube text { text-anchor: middle; font-weight: 700; }
.cube-text { fill: #b4b6c0; font-size: 13px; }
.cube-face { fill: #555968; font-size: 8px; }
.scg {
  position: absolute;
  right: 34px;
  top: 129px;
  display: flex;
  align-items: center;
  justify-content: space-between;
  width: 40px;
  height: 15px;
  padding: 0 4px;
  border-radius: 3px;
  background: #9598a5;
  color: #5b5e6c;
}
.nav-bar { position: absolute; right: 4px; top: 167px; border-radius: 3px; background: #60646f; }
.prompt-tip {
  position: absolute;
  left: 684px;
  top: 166px;
  display: flex;
  align-items: center;
  justify-content: space-between;
  width: 377px;
  height: 20px;
  padding: 0 3px 2px 3px;
  border: 1px solid #0b0c10;
  background: #99979c;
  color: #14151a;
}
.history {
  position: absolute;
  right: 5px;
  bottom: 1px;
  width: 477px;
  display: flex;
  flex-direction: column;
  align-items: flex-start;
  gap: 4px;
  color: #e9eaed;
  font: 10px/14px "DejaVu Sans Mono", monospace;
  white-space: pre;
}
.history p { padding: 0 2px; border-radius: 2px; background: #50535d; }
.history .old { color: #a4a6ad; }
.history .mid { color: #cfd1d6; }

/* Command line */
.command { display: flex; align-items: center; height: 23px; border-bottom: 1px solid var(--panel); background: #2b2e3a; }
.command > button { width: 19px; display: grid; place-items: center; }
.line {
  flex: 1;
  display: flex;
  align-items: center;
  gap: 4px;
  height: 22px;
  margin-left: 2px;
  padding: 2px 0 0 20px;
  background: #fff;
  color: #14151a;
  font: 10px/14px "DejaVu Sans Mono", monospace;
}
.line b { margin: 0 7px 0 0; }
.line span { margin-right: -4px; }
.line button { padding: 0 1px; border-radius: 3px; background: #d0d1d5; white-space: pre; }
.line em { font-style: normal; color: #2f72c4; }
.line .end { margin-left: -4px; }
.line input { flex: 1; min-width: 0; border: 0; background: none; outline: 0; }

/* Status bar */
.status { position: relative; display: flex; justify-content: space-between; height: 27px; }
.layouts { display: flex; align-items: flex-start; padding-left: 12px; gap: 3px; color: #b0b3bd; }
.layouts button { height: 16px; padding: 0 8px; border-radius: 0 0 6px 6px; background: #2d3142; }
.layouts .on { background: var(--panel); color: #fff; font-weight: 700; }
.layouts .add { padding: 0 8px; }
.toggles { display: flex; align-items: center; gap: 3px; padding: 0 3px 1px 0; }
.toggles button { display: grid; place-items: center; min-width: 18px; height: 20px; background: var(--panel); }
.toggles .caret { margin: 0 2px 0 1px; }
.toggles .hot { background: #5f8fc6; }
.toggles .word { padding: 0 3px; }
.toggles .gap { margin-left: 4px; }
.watermark {
  position: absolute;
  right: 94px;
  top: 1px;
  color: rgba(200, 202, 208, .5);
  font-size: 20px;
  line-height: 24px;
  pointer-events: none;
}
```
